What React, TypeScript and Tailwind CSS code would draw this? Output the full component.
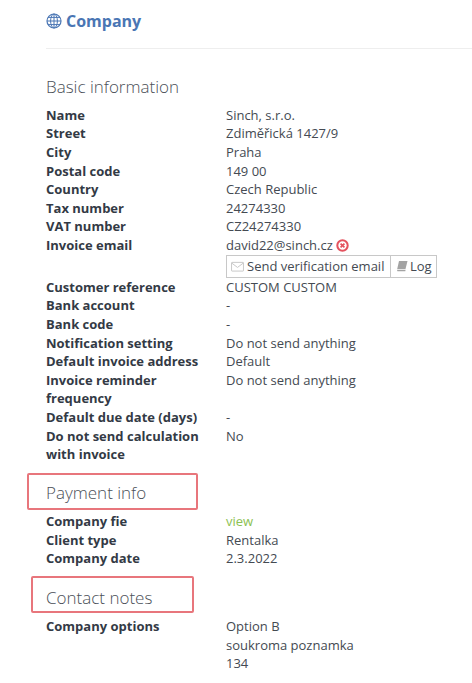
import type { ReactNode } from "react";

function Row({ label, children }: { label: string; children?: ReactNode }) {
  return (
    <div className="flex leading-[18.6px]">
      <div className="w-[180px] shrink-0 pr-5 font-bold text-[#333a45]">{label}</div>
      <div className="min-w-0 flex-1 text-[#444a52]">{children}</div>
    </div>
  );
}

function Heading({ children, box }: { children: ReactNode; box?: string }) {
  return (
    <div className="relative">
      {box && <div className={`absolute rounded-[2px] border-2 border-[#e8767c] ${box}`} />}
      <h3 className="text-[17px] leading-[24px] font-light text-[#4a4f57]">{children}</h3>
    </div>
  );
}

function GlobeIcon() {
  return (
    <svg viewBox="0 0 16 16" className="h-[16px] w-[16px]" fill="none" stroke="currentColor" strokeWidth="1" aria-hidden>
      <circle cx="8" cy="8" r="7" strokeWidth="1.2" />
      <ellipse cx="8" cy="8" rx="3.4" ry="7" />
      <path d="M8 1v14M1 8h14M2 4.4h12M2 11.6h12" />
    </svg>
  );
}

function MailIcon() {
  return (
    <svg viewBox="0 0 14 12" className="h-[11px] w-[13px] text-[#c4c4c4]" fill="none" stroke="currentColor" aria-hidden>
      <rect x="0.5" y="1.5" width="13" height="9.5" rx="0.5" />
      <path d="M1 2.5l6 4.5 6-4.5" />
    </svg>
  );
}

function BookIcon() {
  return (
    <svg viewBox="0 0 12 12" className="h-[12px] w-[12px] text-[#a3a3a3]" fill="currentColor" aria-hidden>
      <path d="M3 1h8.5L9.5 9H1.2z" />
      <path d="M1 9.8h8.6l-.3 1.4H1.4z" />
    </svg>
  );
}

function ErrorIcon() {
  return (
    <svg viewBox="0 0 14 14" className="h-[13px] w-[13px] text-[#e4535f]" fill="none" stroke="currentColor" aria-hidden>
      <circle cx="7" cy="7" r="5.6" strokeWidth="2.2" />
      <path d="M4.9 4.9l4.2 4.2M9.1 4.9l-4.2 4.2" strokeWidth="1.8" />
    </svg>
  );
}

export default function App() {
  return (
    <div className="h-[683px] w-[472px] overflow-hidden bg-white pl-[46px] font-['Open_Sans',sans-serif] text-[13px]">
      <div className="flex items-center gap-[4px] pt-[10px] text-[#4a76b4]">
        <GlobeIcon />
        <h2 className="text-[16px] leading-[22px] font-bold">Company</h2>
      </div>
      <div className="mt-[16px] h-px bg-[#eeeeee]" />

      <div className="mt-[26px]">
        <Heading>Basic information</Heading>
      </div>
      <div className="mt-[6.85px]">
        <Row label="Name">Sinch, s.r.o.</Row>
        <Row label="Street">Zdiměřická 1427/9</Row>
        <Row label="City">Praha</Row>
        <Row label="Postal code">149 00</Row>
        <Row label="Country">Czech Republic</Row>
        <Row label="Tax number">24274330</Row>
        <Row label="VAT number">CZ24274330</Row>
        <Row label="Invoice email">
          <div className="flex items-center gap-[3px]">
            david22@sinch.cz
            <ErrorIcon />
          </div>
          <div className="flex h-[23.2px] w-[211px] border border-[#c8c8c8] leading-[21px]">
            <div className="flex w-[164px] items-center gap-[3px] border-r border-[#c8c8c8] pl-[4px]">
              <MailIcon />
              <span>Send verification email</span>
            </div>
            <div className="flex items-center gap-[2px] pl-[5px]">
              <BookIcon />
              <span>Log</span>
            </div>
          </div>
        </Row>
        <Row label="Customer reference">CUSTOM CUSTOM</Row>
        <Row label="Bank account">-</Row>
        <Row label="Bank code">-</Row>
        <Row label="Notification setting">Do not send anything</Row>
        <Row label="Default invoice address">Default</Row>
        <Row label="Invoice reminder frequency">Do not send anything</Row>
        <Row label="Default due date (days)">-</Row>
        <Row label="Do not send calculation with invoice">No</Row>
      </div>

      <div className="mt-[17.65px]">
        <Heading box="top-[-8px] left-[-19px] h-[37px] w-[171px]">Payment info</Heading>
      </div>
      <div className="mt-[6.6px]">
        <Row label="Company fie">
          <span className="text-[#8cc152]">view</span>
        </Row>
        <Row label="Client type">Rentalka</Row>
        <Row label="Company date">2.3.2022</Row>
      </div>

      <div className="mt-[18.4px]">
        <Heading box="top-[-10px] left-[-15px] h-[37px] w-[163px]">Contact notes</Heading>
      </div>
      <div className="mt-[7px]">
        <Row label="Company options">
          <div>Option B</div>
          <div>soukroma poznamka</div>
          <div>134</div>
        </Row>
      </div>
    </div>
  );
}
